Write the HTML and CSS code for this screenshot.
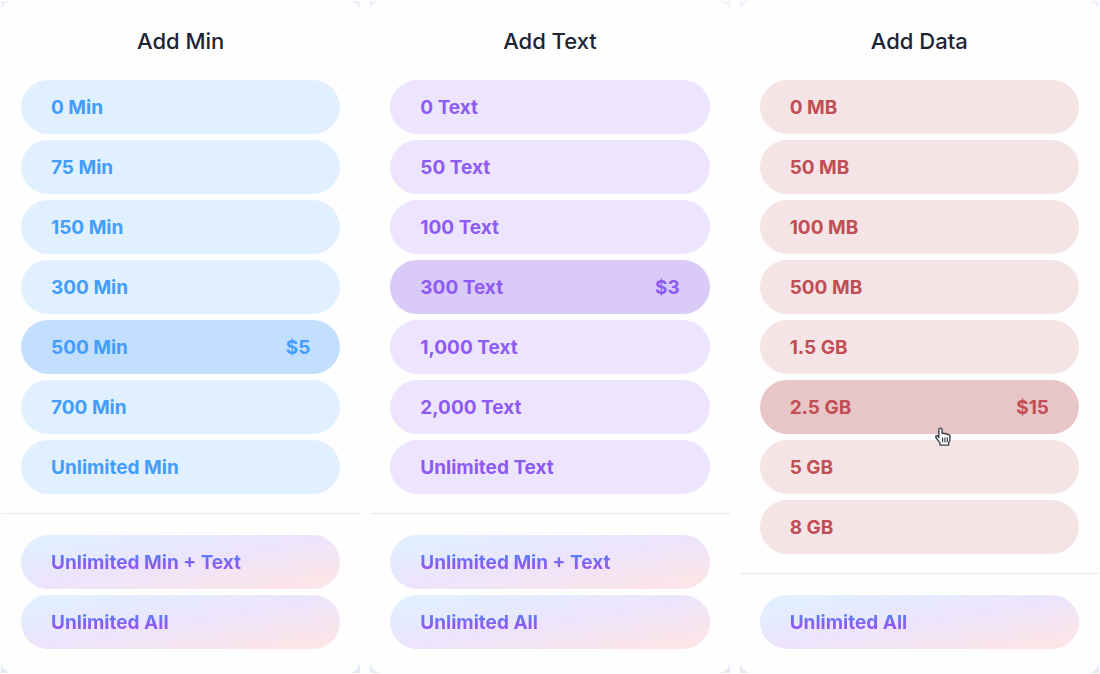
FILE: index.html
```html
<!DOCTYPE html>
<html lang="en">
<head>
    <meta charset="UTF-8">
    <meta name="viewport" content="width=device-width, initial-scale=1">
    <title>Build your plan</title>
    <link rel="stylesheet" href="styles.css">
</head>
<body>
    <main class="plans">
        <section class="column min">
            <div class="card">
                <h2>Add Min</h2>
                <div class="options">
                    <button type="button" class="option">0 Min</button>
                    <button type="button" class="option">75 Min</button>
                    <button type="button" class="option">150 Min</button>
                    <button type="button" class="option">300 Min</button>
                    <button type="button" class="option active" aria-pressed="true">500 Min <span>$5</span></button>
                    <button type="button" class="option">700 Min</button>
                    <button type="button" class="option">Unlimited Min</button>
                </div>
                <div class="options bundles">
                    <button type="button" class="option bundle"><span>Unlimited Min + Text</span></button>
                    <button type="button" class="option bundle"><span>Unlimited All</span></button>
                </div>
            </div>
        </section>

        <section class="column text">
            <div class="card">
                <h2>Add Text</h2>
                <div class="options">
                    <button type="button" class="option">0 Text</button>
                    <button type="button" class="option">50 Text</button>
                    <button type="button" class="option">100 Text</button>
                    <button type="button" class="option active" aria-pressed="true">300 Text <span>$3</span></button>
                    <button type="button" class="option">1,000 Text</button>
                    <button type="button" class="option">2,000 Text</button>
                    <button type="button" class="option">Unlimited Text</button>
                </div>
                <div class="options bundles">
                    <button type="button" class="option bundle"><span>Unlimited Min + Text</span></button>
                    <button type="button" class="option bundle"><span>Unlimited All</span></button>
                </div>
            </div>
        </section>

        <section class="column data">
            <div class="card">
                <h2>Add Data</h2>
                <div class="options">
                    <button type="button" class="option">0 MB</button>
                    <button type="button" class="option">50 MB</button>
                    <button type="button" class="option">100 MB</button>
                    <button type="button" class="option">500 MB</button>
                    <button type="button" class="option">1.5 GB</button>
                    <button type="button" class="option active" aria-pressed="true">2.5 GB <span>$15</span>
                        <svg class="pointer" viewBox="0 0 18 22" aria-hidden="true">
                            <path d="M4.1 11V2.8a1.7 1.7 0 0 1 3.4 0v4c.8-.4 2.3-.4 2.8.4.9-.4 2.3-.2 2.7.6 1.2-.2 2.8.2 2.8 1.800v3.400c0 2-1.400 2.900-1.400 4.500v1.600H5.400V17.500c0-1.200-1.500-2.300-2.600-4L1 11c-.8-1.600.8-2.700 2-1.600z" fill="#fff" stroke="#3c414c" stroke-width="1.5" stroke-linejoin="round"/>
                            <path d="M8 11v5M10.500 11v5M13 11v5" stroke="#3c414c" stroke-width="1.300" fill="none"/>
                        </svg>
                    </button>
                    <button type="button" class="option">5 GB</button>
                    <button type="button" class="option">8 GB</button>
                </div>
                <div class="options bundles">
                    <button type="button" class="option bundle"><span>Unlimited All</span></button>
                </div>
            </div>
        </section>
    </main>
</body>
</html>
```
FILE: styles.css
```css
body {
    margin: 0;
    background-color: #fefefe;
    font-family: Inter, Arial, sans-serif;
}
.plans {
    display: flex;
    align-items: flex-start;
    gap: 10px;
    padding: 1px;
}
.column {
    flex: 1;
    background: linear-gradient(#f1f2fb, #e3eaf5);
}
.card {
    background-color: #fefefe;
    border-radius: 12px;
    padding-bottom: 24px;
}
h2 {
    margin: 0;
    padding: 25px 20px 23px;
    font-size: 22px;
    font-weight: 500;
    line-height: 31px;
    text-align: center;
    color: #1c2536;
}
.options {
    display: flex;
    flex-direction: column;
    gap: 6px;
    padding: 0 20px 19px;
}
.bundles {
    border-top: 1px solid #e8e9ec;
    padding: 21px 20px 0;
}
.option {
    position: relative;
    display: flex;
    justify-content: space-between;
    align-items: center;
    width: 100%;
    height: 54px;
    padding: 0 30px;
    border: none;
    border-radius: 27px;
    font-family: inherit;
    font-size: 19px;
    font-weight: 700;
    text-align: left;
    cursor: pointer;
}
.min .option {
    background-color: #e1f0fe;
    color: #439dfc;
}
.min .active {
    background-color: #c3dffe;
}
.text .option {
    background-color: #ede5fd;
    color: #8d5bf3;
}
.text .active {
    background-color: #d9caf8;
}
.data .option {
    background-color: #f5e4e5;
    color: #c04e54;
}
.data .active {
    background-color: #e8c5c7;
}
.column .bundle {
    background: linear-gradient(to bottom right, #e1efff 10%, #ede4fc 50%, #fce5e8 90%);
}
.bundle span {
    background: linear-gradient(#4f86fb 10%, #8a5bf3 60%, #a052e8);
    background-clip: text;
    -webkit-background-clip: text;
    color: transparent;
}
.pointer {
    position: absolute;
    top: 47px;
    left: 55%;
    z-index: 1;
    width: 17px;
    height: 21px;
}
```
